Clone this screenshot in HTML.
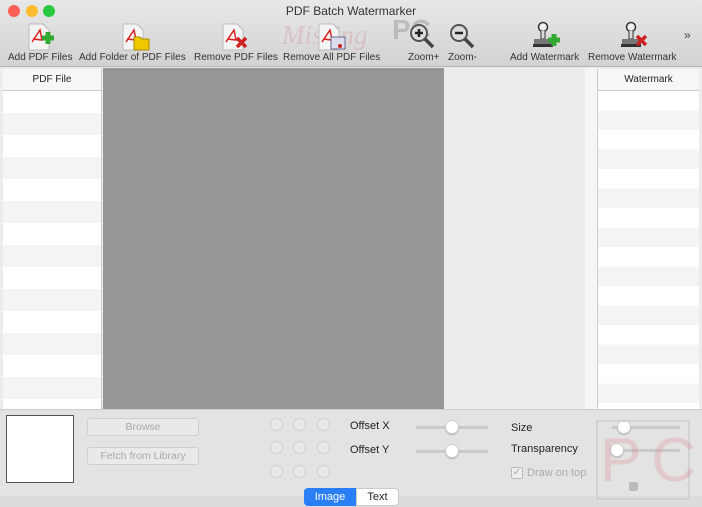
<!DOCTYPE html><html><head><style>
*{margin:0;padding:0;box-sizing:border-box}
body{width:702px;height:507px;overflow:hidden;font-family:"Liberation Sans",sans-serif;background:#e6e6e6;position:relative;font-size:11px;color:#222}
.a{position:absolute}
.top{left:0;top:0;width:702px;height:67px;background:linear-gradient(#e8e8e8,#d2d2d2);border-bottom:1px solid #b8b8b8;border-radius:5px 5px 0 0}
.dot{top:5px;width:12px;height:12px;border-radius:50%}
.lbl{top:52px;font-size:10px;color:#333;white-space:nowrap}
.hdr{background:#f7f7f7;border-bottom:1px solid #ccc;text-align:center;font-size:10px;line-height:21px}
.rl{background:repeating-linear-gradient(#fff 0 22px,#f3f4f4 22px 44px)}
.rr{background:repeating-linear-gradient(#fff 0 19.5px,#f3f4f4 19.5px 39px)}
.c{width:13px;height:13px;border-radius:50%;border:1px solid #cfcfcf;background:#e9e9e9}
.btn{border:1px solid #cfcfcf;border-radius:3px;background:#e9e9e9;color:#a9a9a9;font-size:10.5px;text-align:center;line-height:16px}
.trk{height:3px;background:#c9c9c9;border-radius:2px}
.kn{width:14px;height:14px;border-radius:50%;background:#fff;border:1px solid #ccc;box-shadow:0 1px 1px rgba(0,0,0,.2)}
</style></head><body>
<div class="a top"></div>
<div class="a dot" style="left:8px;background:#fe5f57"></div>
<div class="a dot" style="left:26px;background:#febc2e"></div>
<div class="a dot" style="left:43px;background:#28c840"></div>
<div class="a" style="left:0;width:702px;top:4px;text-align:center;font-size:12px;color:#333">PDF Batch Watermarker</div>
<div class="a" style="left:282px;top:20px;font-family:'Liberation Serif',serif;font-style:italic;font-size:27px;color:rgba(200,80,90,.18)">Missing</div>
<div class="a" style="left:392px;top:14px;font-size:28px;font-weight:bold;color:rgba(120,120,120,.35)">PC</div>
<svg class="a" style="left:26px;top:22px" width="30" height="30"><path d="M3 2h14l6 6v20H3z" fill="#f4f4f4" stroke="#bbb"/><path d="M6 20l8-12 2 10-9-1" fill="none" stroke="#d22" stroke-width="1.5"/><path d="M16 16h12M22 10v12" stroke="#3a3" stroke-width="5"/></svg>
<svg class="a" style="left:120px;top:22px" width="30" height="30"><path d="M3 2h14l6 6v20H3z" fill="#f4f4f4" stroke="#bbb"/><path d="M6 20l8-12 2 10-9-1" fill="none" stroke="#d22" stroke-width="1.5"/><path d="M14 15h6l2 2h7v11H14z" fill="#f0c800" stroke="#a80"/></svg>
<svg class="a" style="left:220px;top:22px" width="30" height="30"><path d="M3 2h14l6 6v20H3z" fill="#f4f4f4" stroke="#bbb"/><path d="M6 20l8-12 2 10-9-1" fill="none" stroke="#d22" stroke-width="1.5"/><path d="M17 16l9 9M26 16l-9 9" stroke="#c22" stroke-width="3.5"/></svg>
<svg class="a" style="left:316px;top:22px" width="30" height="30"><path d="M3 2h14l6 6v20H3z" fill="#f4f4f4" stroke="#bbb"/><path d="M6 20l8-12 2 10-9-1" fill="none" stroke="#d22" stroke-width="1.5"/><rect x="15" y="15" width="14" height="12" fill="#dde" stroke="#668"/><circle cx="24" cy="24" r="2" fill="#c22"/></svg>
<svg class="a" style="left:408px;top:22px" width="30" height="30"><circle cx="11" cy="11" r="8" fill="#ddd" stroke="#555" stroke-width="2"/><path d="M17 17l8 8" stroke="#444" stroke-width="3.5"/><path d="M7 11h8M11 7v8" stroke="#222" stroke-width="2.5"/></svg>
<svg class="a" style="left:448px;top:22px" width="30" height="30"><circle cx="11" cy="11" r="8" fill="#ddd" stroke="#555" stroke-width="2"/><path d="M17 17l8 8" stroke="#444" stroke-width="3.5"/><path d="M7 11h8" stroke="#222" stroke-width="2.5"/></svg>
<svg class="a" style="left:530px;top:20px" width="32" height="32"><circle cx="13" cy="7" r="4.5" fill="#eee" stroke="#333" stroke-width="1.5"/><path d="M11 11v8h4v-8" fill="#ddd" stroke="#333"/><rect x="4" y="19" width="18" height="5" fill="#777"/><rect x="3" y="24" width="20" height="3" fill="#333"/><path d="M18 20h12M24 14v12" stroke="#3a3" stroke-width="5"/></svg>
<svg class="a" style="left:618px;top:20px" width="32" height="32"><circle cx="13" cy="7" r="4.5" fill="#eee" stroke="#333" stroke-width="1.5"/><path d="M11 11v8h4v-8" fill="#ddd" stroke="#333"/><rect x="4" y="19" width="18" height="5" fill="#777"/><rect x="3" y="24" width="20" height="3" fill="#333"/><path d="M19 16l9 9M28 16l-9 9" stroke="#c22" stroke-width="3.5"/></svg>
<div class="a lbl" style="left:8px">Add PDF Files</div>
<div class="a lbl" style="left:79px">Add Folder of PDF Files</div>
<div class="a lbl" style="left:194px">Remove PDF Files</div>
<div class="a lbl" style="left:283px">Remove All PDF Files</div>
<div class="a lbl" style="left:408px">Zoom+</div>
<div class="a lbl" style="left:448px">Zoom-</div>
<div class="a lbl" style="left:510px">Add Watermark</div>
<div class="a lbl" style="left:588px">Remove Watermark</div>
<div class="a" style="left:684px;top:28px;font-size:12px;color:#444">»</div>
<div class="a" style="left:0;top:68px;width:702px;height:341px;background:#ececec"></div>
<div class="a rl" style="left:3px;top:91px;width:99px;height:318px;border-right:1px solid #ccc"></div>
<div class="a hdr" style="left:3px;top:69px;width:99px;height:22px;border-right:1px solid #ccc">PDF File</div>
<div class="a" style="left:103px;top:68px;width:341px;height:341px;background:#979797"></div>
<div class="a" style="left:585px;top:68px;width:12px;height:341px;background:#f5f5f5"></div>
<div class="a rr" style="left:597px;top:91px;width:102px;height:318px;border-left:1px solid #ccc"></div>
<div class="a hdr" style="left:597px;top:69px;width:102px;height:22px;border-left:1px solid #ccc">Watermark</div>
<div class="a" style="left:0;top:409px;width:702px;height:98px;background:#e3e3e3;border-top:1px solid #ccc"></div>
<div class="a" style="left:0;top:496px;width:702px;height:11px;background:#dcdcdc"></div>
<div class="a" style="left:6px;top:415px;width:68px;height:68px;background:#fff;border:1px solid #555"></div>
<div class="a btn" style="left:87px;top:418px;width:112px;height:18px">Browse</div>
<div class="a btn" style="left:87px;top:447px;width:112px;height:18px">Fetch from Library</div>
<div class="a c" style="left:270px;top:418px"></div><div class="a c" style="left:293px;top:418px"></div><div class="a c" style="left:317px;top:418px"></div>
<div class="a c" style="left:270px;top:441px"></div><div class="a c" style="left:293px;top:441px"></div><div class="a c" style="left:317px;top:441px"></div>
<div class="a c" style="left:270px;top:465px"></div><div class="a c" style="left:293px;top:465px"></div><div class="a c" style="left:317px;top:465px"></div>
<div class="a" style="left:350px;top:420px;font-size:11px">Offset X</div>
<div class="a" style="left:350px;top:444px;font-size:11px">Offset Y</div>
<div class="a trk" style="left:416px;top:426px;width:72px"></div><div class="a kn" style="left:445px;top:420px"></div>
<div class="a trk" style="left:416px;top:450px;width:72px"></div><div class="a kn" style="left:445px;top:444px"></div>
<div class="a" style="left:511px;top:422px;font-size:11px">Size</div>
<div class="a" style="left:511px;top:443px;font-size:11px">Transparency</div>
<div class="a trk" style="left:612px;top:426px;width:68px"></div><div class="a kn" style="left:617px;top:420px"></div>
<div class="a trk" style="left:612px;top:449px;width:68px"></div><div class="a kn" style="left:610px;top:443px"></div>
<div class="a" style="left:511px;top:467px;width:12px;height:12px;border:1px solid #bbb;border-radius:2px;background:#eee;color:#aaa;font-size:10px;line-height:10px;text-align:center">✓</div>
<div class="a" style="left:527px;top:467px;color:#aaa;font-size:11px">Draw on top</div>
<div class="a" style="left:596px;top:420px;width:94px;height:80px;border:2px solid rgba(200,200,200,.6)"></div>
<div class="a" style="left:600px;top:425px;font-size:62px;color:rgba(220,120,130,.25);letter-spacing:10px">PC</div>
<div class="a" style="left:629px;top:482px;width:9px;height:9px;background:#bbb;border-radius:2px"></div>
<div class="a" style="left:304px;top:488px;width:52px;height:18px;background:#2a7ff7;color:#fff;border-radius:4px 0 0 4px;text-align:center;line-height:18px;font-size:11px">Image</div>
<div class="a" style="left:356px;top:488px;width:43px;height:18px;background:#fff;border:1px solid #ccc;border-radius:0 4px 4px 0;text-align:center;line-height:16px;font-size:11px">Text</div>
</body></html>
